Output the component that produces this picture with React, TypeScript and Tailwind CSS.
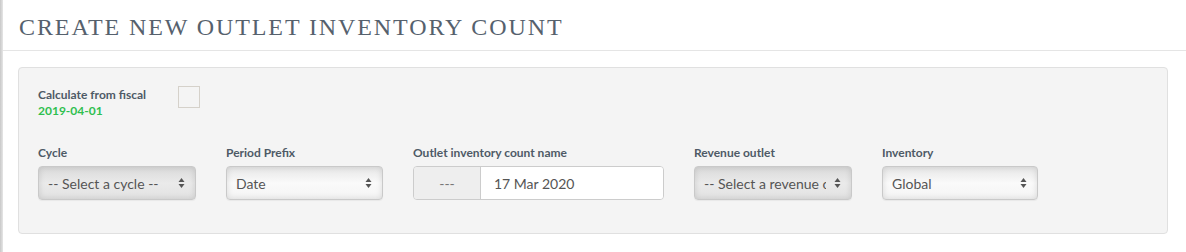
import React from "react";

const font = { fontFamily: "Lato, 'Open Sans', sans-serif" };

function Arrows() {
  return (
    <svg width="7" height="12" viewBox="0 0 7 12" className="shrink-0">
      <path d="M3.5 1 L6.5 5 L0.5 5 Z" fill="#555" />
      <path d="M3.5 11 L6.5 7 L0.5 7 Z" fill="#555" />
    </svg>
  );
}

function Select({ label, value, width, placeholder }: { label: string; value: string; width: string; placeholder?: boolean }) {
  return (
    <div className="flex flex-col gap-[6px]">
      <label className="text-[12px] font-bold text-[#4e5a66] leading-[14px]">{label}</label>
      <div
        className={`${width} h-[34px] rounded-[4px] border border-[#c9c9c9] flex items-center justify-between pl-[9px] pr-[10px] shadow-[inset_0_0_6px_rgba(0,0,0,0.12),0_1px_1px_rgba(0,0,0,0.05)] ${
          placeholder
            ? "bg-gradient-to-b from-[#dadada] via-[#eaeaea] to-[#e2e2e2]"
            : "bg-gradient-to-b from-[#e6e6e6] via-[#fafafa] to-[#f4f4f4]"
        }`}
      >
        <span className="text-[14px] text-[#555] whitespace-nowrap overflow-hidden mr-2">{value}</span>
        <Arrows />
      </div>
    </div>
  );
}

export default function App() {
  return (
    <div className="w-[1186px] h-[252px] flex bg-white" style={font}>
      <div className="w-[3px] bg-gradient-to-r from-[#c8c8c8] to-[#e6e6e6]" />
      <div className="flex-1 flex flex-col">
        <div className="h-[51px] border-b border-[#e5e5e5] flex items-center pl-[16px]">
          <h1
            className="text-[24px] text-[#56616d] uppercase tracking-[1.9px] pt-[4px]"
            style={{ fontFamily: "'Liberation Serif', 'DejaVu Serif', serif" }}
          >
            Create new outlet inventory count
          </h1>
        </div>
        <div className="mt-[16px] ml-[15px] w-[1150px] h-[167px] bg-[#f4f4f4] border border-[#e0e0e0] rounded-[4px] pl-[19px] pt-[19px]">
          <div className="flex items-start">
            <div className="flex flex-col w-[140px]">
              <span className="text-[12px] font-bold text-[#4e5a66] leading-[16px]">Calculate from fiscal</span>
              <span className="text-[12px] font-bold text-[#2fbf4f] leading-[16px]">2019-04-01</span>
            </div>
            <div className="w-[22px] h-[22px] border border-[#d5d1ca] bg-[#f4f4f4] -mt-[1px]" />
          </div>
          <div className="flex gap-[30px] mt-[27px]">
            <Select label="Cycle" value="-- Select a cycle --" width="w-[158px]" placeholder />
            <Select label="Period Prefix" value="Date" width="w-[157px]" />
            <div className="flex flex-col gap-[6px]">
              <label className="text-[12px] font-bold text-[#4e5a66] leading-[14px]">Outlet inventory count name</label>
              <div className="w-[251px] h-[34px] flex rounded-[4px] border border-[#cccccc] overflow-hidden">
                <div className="w-[67px] bg-[#eeeeee] border-r border-[#cccccc] flex items-center justify-center text-[14px] text-[#777]">
                  ---
                </div>
                <div className="flex-1 bg-white flex items-center pl-[13px] text-[14px] text-[#555]">17 Mar 2020</div>
              </div>
            </div>
            <Select label="Revenue outlet" value="-- Select a revenue outlet --" width="w-[158px]" placeholder />
            <Select label="Inventory" value="Global" width="w-[156px]" />
          </div>
        </div>
      </div>
    </div>
  );
}
